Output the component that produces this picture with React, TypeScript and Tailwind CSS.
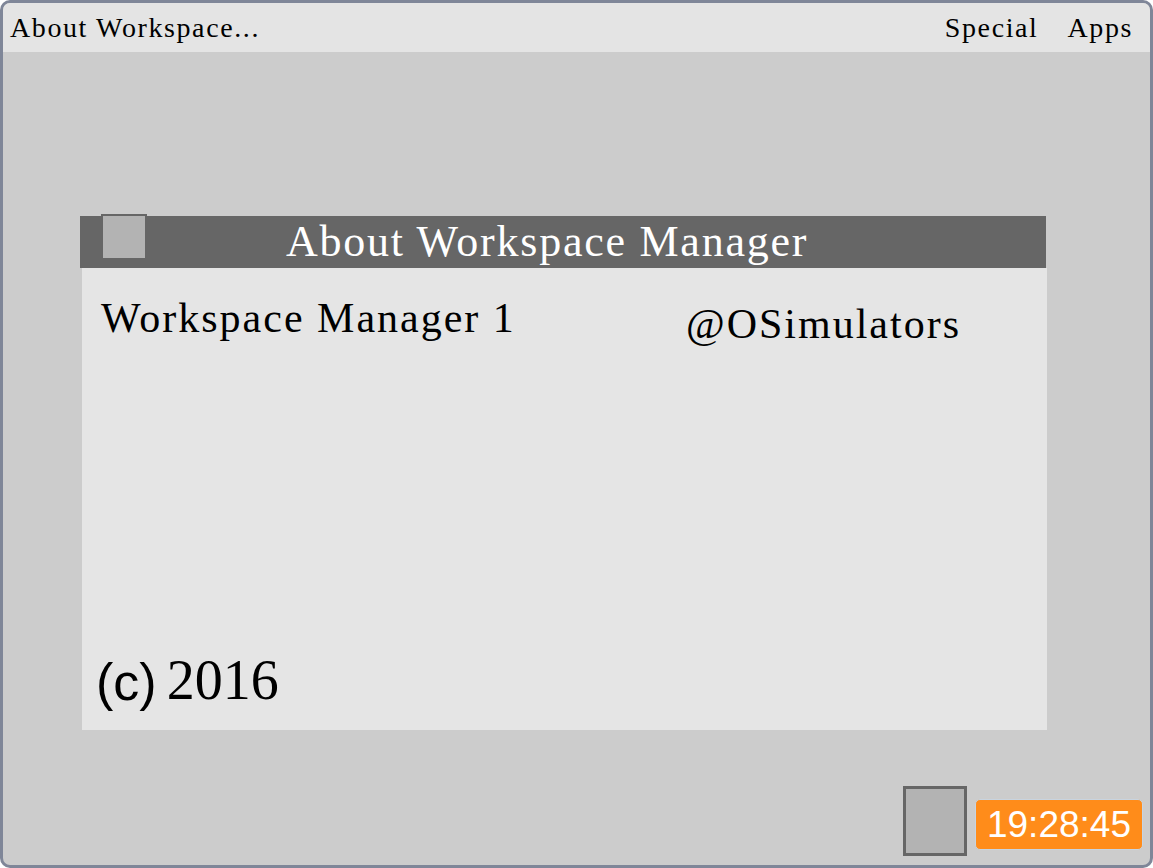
export default function App() {
  const serif = { fontFamily: '"Liberation Serif", "DejaVu Serif", serif' };
  return (
    <div className="w-[1153px] h-[868px] bg-white">
      <div className="w-full h-full border-[3px] border-[#7f8698] rounded-[10px] overflow-hidden bg-[#cccccc] flex flex-col">
        {/* menu bar */}
        <div className="h-[49px] shrink-0 bg-[#e4e4e4] flex items-center text-black" style={serif}>
          <div className="pl-[7px] text-[28px] tracking-[1.6px] leading-none">About Workspace...</div>
          <div className="ml-auto flex items-center gap-[29px] pr-[17px] text-[28px] tracking-[1.6px] leading-none">
            <span>Special</span>
            <span>Apps</span>
          </div>
        </div>

        {/* desktop */}
        <div className="flex-1 flex flex-col">
          <div className="mt-[164px] ml-[77px] w-[966px]">
            <div className="relative h-[52px] bg-[#666666] flex items-center justify-center text-white" style={serif}>
              <div className="absolute left-[21px] top-[-2px] w-[46px] h-[46px] border-2 border-[#666666] bg-[#b3b3b3]" />
              <span className="text-[44px] tracking-[1.75px] leading-none pr-[32px]">About Workspace Manager</span>
            </div>
            <div className="ml-[2px] w-[965px] h-[462px] bg-[#e5e5e5] flex flex-col text-black" style={serif}>
              <div className="flex items-start pt-[29px]">
                <span className="pl-[19px] text-[42px] tracking-[2px] leading-none">Workspace Manager 1</span>
                <span className="ml-auto mr-[86px] mt-[6px] text-[42px] tracking-[2px] leading-none">@OSimulators</span>
              </div>
              <div className="mt-auto pb-[22px] pl-[14px] flex items-end leading-none">
                <span className="text-[52px]" style={{ fontFamily: '"Liberation Sans", Arial, sans-serif' }}>(c)</span>
                <span className="ml-[10px] text-[56px]">2016</span>
              </div>
            </div>
          </div>

          <div className="mt-auto flex items-end justify-end gap-[8px] pr-[7px] pb-[9px]">
            <div className="w-[64px] h-[70px] border-[3px] border-[#666666] bg-[#b3b3b3]" />
            <div
              className="h-[51px] px-[11px] flex items-center rounded-[5px] bg-[#ff8c1a] border border-[#c8d4e0] text-white text-[37px] leading-none mb-[6px]"
              style={{ fontFamily: '"Liberation Sans", Arial, sans-serif' }}
            >
              19:28:45
            </div>
          </div>
        </div>
      </div>
    </div>
  );
}
